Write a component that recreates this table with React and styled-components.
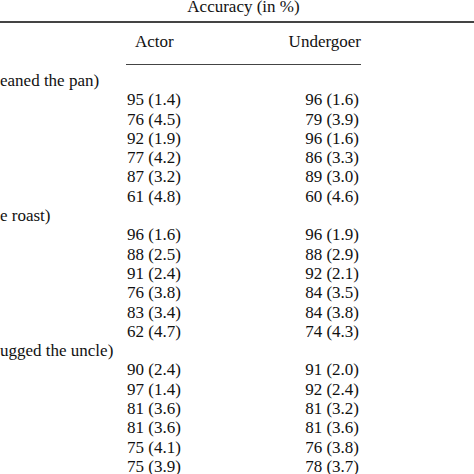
import React from "react";
import styled, { createGlobalStyle } from "styled-components";

const groups = [
  {
    label: "eaned the pan)",
    rows: [
      ["95 (1.4)", "96 (1.6)"],
      ["76 (4.5)", "79 (3.9)"],
      ["92 (1.9)", "96 (1.6)"],
      ["77 (4.2)", "86 (3.3)"],
      ["87 (3.2)", "89 (3.0)"],
      ["61 (4.8)", "60 (4.6)"],
    ],
  },
  {
    label: "e roast)",
    rows: [
      ["96 (1.6)", "96 (1.9)"],
      ["88 (2.5)", "88 (2.9)"],
      ["91 (2.4)", "92 (2.1)"],
      ["76 (3.8)", "84 (3.5)"],
      ["83 (3.4)", "84 (3.8)"],
      ["62 (4.7)", "74 (4.3)"],
    ],
  },
  {
    label: "ugged the uncle)",
    rows: [
      ["90 (2.4)", "91 (2.0)"],
      ["97 (1.4)", "92 (2.4)"],
      ["81 (3.6)", "81 (3.2)"],
      ["81 (3.6)", "81 (3.6)"],
      ["75 (4.1)", "76 (3.8)"],
      ["75 (3.9)", "78 (3.7)"],
    ],
  },
];

const GlobalStyle = createGlobalStyle`
  html, body {
    margin: 0;
    padding: 0;
    background: #ffffff;
    overflow: hidden;
  }
  body {
    font-family: "Liberation Serif", "Times New Roman", serif;
    font-size: 17px;
    color: #111;
  }
`;

const Page = styled.div`
  width: 474px;
  height: 480px;
  overflow: hidden;
  margin-top: -3.3px;
  line-height: 19.3px;
`;

const Row = styled.div`
  display: grid;
  grid-template-columns: 126px 117px 118px 1fr;
`;

const Spanner = styled.div`
  grid-column: 2 / 4;
  text-align: center;
`;

const TopRule = styled.div`
  margin-top: 5px;
  border-top: 2px solid #444;
`;

const HeadRow = styled(Row)`
  margin-top: 8.7px;
`;

const ColHead = styled.div`
  padding-left: ${(p) => (p.$right ? 0 : 9)}px;
  text-align: ${(p) => (p.$right ? "right" : "left")};
`;

const SubRuleRow = styled(Row)`
  margin-top: 13px;
`;

const SubRule = styled.div`
  grid-column: 2 / 4;
  border-top: 1px solid #444;
`;

const Body = styled.div`
  margin-top: 6px;
`;

const Label = styled.div`
  grid-column: 1 / 3;
  white-space: nowrap;
`;

const Cell = styled.div`
  text-align: ${(p) => (p.$right ? "right" : "left")};
  padding-left: ${(p) => (p.$right ? 0 : 1)}px;
  padding-right: ${(p) => (p.$right ? 2 : 0)}px;
  white-space: nowrap;
`;

export default function App() {
  return (
    <>
      <GlobalStyle />
      <Page>
        <Row>
          <Spanner>Accuracy (in %)</Spanner>
        </Row>
        <TopRule />
        <HeadRow>
          <div />
          <ColHead>Actor</ColHead>
          <ColHead $right>Undergoer</ColHead>
        </HeadRow>
        <SubRuleRow>
          <SubRule />
        </SubRuleRow>
        <Body>
          {groups.map((g) => (
            <React.Fragment key={g.label}>
              <Row>
                <Label>{g.label}</Label>
              </Row>
              {g.rows.map((r, i) => (
                <Row key={i}>
                  <div />
                  <Cell>{r[0]}</Cell>
                  <Cell $right>{r[1]}</Cell>
                </Row>
              ))}
            </React.Fragment>
          ))}
        </Body>
      </Page>
    </>
  );
}
